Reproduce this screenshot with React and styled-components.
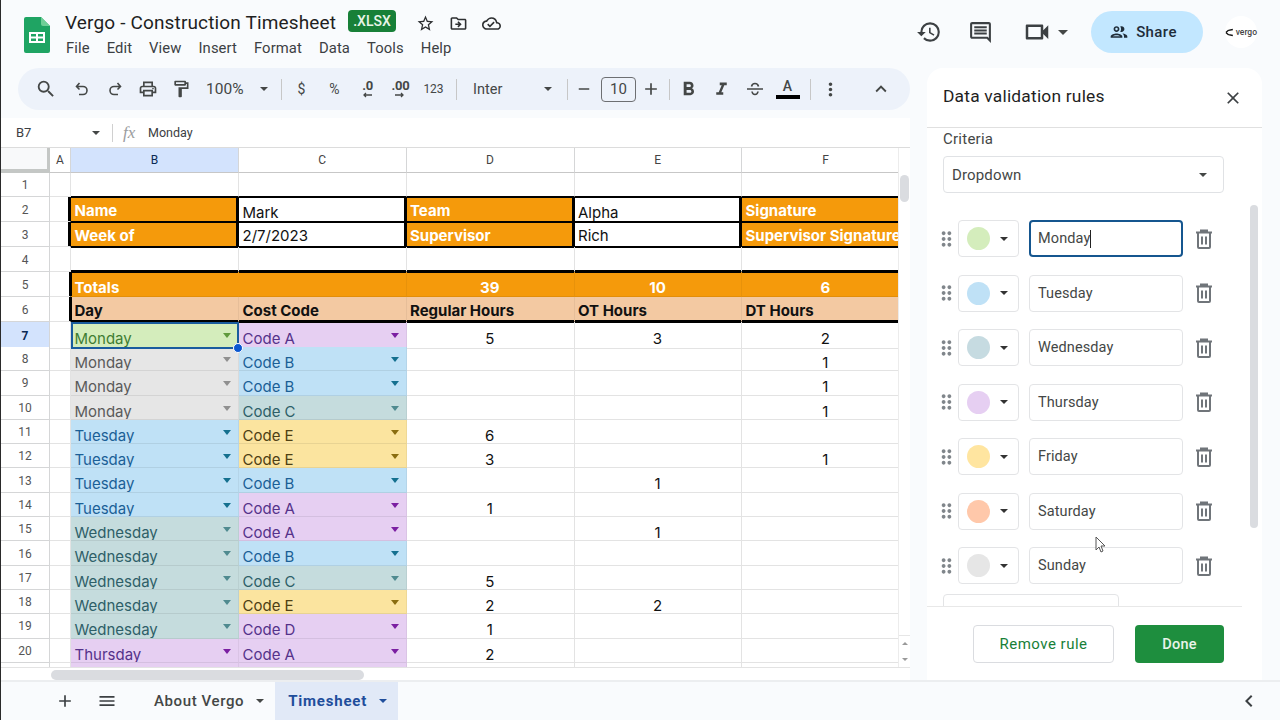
import React from "react";
import styled, { createGlobalStyle } from "styled-components";
import {
  MdSearch, MdOutlinePrint, MdOutlineFormatPaint, MdFormatBold, MdFormatItalic,
  MdMoreVert, MdKeyboardArrowUp, MdDragIndicator, MdClose, MdAdd,
  MdMenu, MdChevronLeft, MdRemove, MdHistory, MdOutlineComment, MdOutlineVideocam, MdOutlineGroup,
  MdStarBorder, MdOutlineDriveFileMove, MdOutlineCloudDone,
} from "react-icons/md";

const Global = createGlobalStyle`
  html, body { margin: 0; padding: 0; background: #f9fbfd; }
  * { box-sizing: border-box; }
  body { font-family: Roboto, "Liberation Sans", sans-serif; color: #444746; overflow: hidden; }
`;

const Page = styled.div`
  width: 1280px; height: 720px; display: flex; flex-direction: column;
  background: #f9fbfd; border-left: 1px solid #2a2a2a; overflow: hidden;
`;
const Header = styled.header`
  height: 68px; flex: none; display: flex; align-items: flex-start; padding-left: 22px;
`;
const LogoWrap = styled.div`margin-top: 16px; width: 28px; height: 38px; flex: none;`;
const TitleColumn = styled.div`margin-left: 14px; padding-top: 9px; display: flex; flex-direction: column;`;
const TitleRow = styled.div`display: flex; align-items: center; height: 26px;`;
const Title = styled.div`font-size: 19px; color: #1f1f1f; letter-spacing: .15px; white-space: nowrap; width: 283px;`;
const Badge = styled.div`
  width: 48px; height: 22px; background: #188038; color: #e8f5e9; border-radius: 4px; font-size: 14px;
  font-weight: 500; display: flex; align-items: center; justify-content: center; margin-top: -3px;
`;
const TitleIcon = styled.span`
  display: flex; width: 33px; justify-content: center; color: #2d2f31; font-size: 19px; margin-top: 2px;
  &:first-of-type { margin-left: 13px; }
`;
const MenuRow = styled.nav`display: flex; gap: 17px; margin-top: 1px; padding-left: 1px;`;
const MenuItem = styled.span`font-size: 14.8px; color: #3c4043; line-height: 24px; letter-spacing: .1px;`;
const HeaderRight = styled.div`margin-left: auto; display: flex; align-items: center; height: 64px; padding-right: 23px;`;
const HeadIcon = styled.span`display: flex; color: #3c4043; font-size: ${p => p.$s || 26}px; margin-right: ${p => p.$mr || 0}px;`;
const Caret = styled.span`
  display: inline-block; flex: none; width: 0; height: 0; border-left: ${p => p.$w || 5}px solid transparent;
  border-right: ${p => p.$w || 5}px solid transparent; border-top: ${p => p.$w || 5}px solid ${p => p.$c || "#444746"};
`;
const ShareButton = styled.button`
  margin-left: 23px; width: 112px; height: 42px; border: 0; border-radius: 21px; background: #c2e7ff; color: #1f2d3a;
  font: 500 15px Roboto, sans-serif; letter-spacing: .4px; display: flex; align-items: center; justify-content: center; gap: 7px; padding: 0 8px 0 0;
  svg { font-size: 20px; }
`;
const VergoBadge = styled.div`
  margin-left: 22px; width: 32px; height: 32px; border-radius: 50%; background: #fff; display: flex; align-items: center;
  justify-content: center; gap: 2px; font: 500 8.5px Roboto, sans-serif; color: #444;
`;

const Main = styled.div`flex: 1; display: flex; min-height: 0;`;
const LeftColumn = styled.div`width: 909px; flex: none; display: flex; flex-direction: column;`;
const Toolbar = styled.div`
  height: 42px; flex: none; margin-left: 17px; border-radius: 21px; background: #edf2fa; display: flex; align-items: center; padding-left: 11px;
  margin-bottom: 8px; color: #444746;
`;
const ToolButton = styled.span`
  width: ${p => p.$wd || 33}px; height: 33px; flex: none; display: flex; align-items: center; justify-content: center; font-size: ${p => p.$s || 20}px;
  margin-left: ${p => p.$ml || 0}px; color: #444746;
`;
const ToolText = styled.span`font-size: ${p => p.$s || 14}px; color: #444746; font-weight: ${p => p.$w || 400};`;
const ToolSelect = styled.div`
  width: ${p => p.$w}px; flex: none; display: flex; align-items: center; justify-content: space-between;
  padding: 0 ${p => p.$pr}px 0 ${p => p.$pl}px; font-size: 15.5px; color: #444746;
`;
const Sep = styled.span`width: 1px; height: 21px; background: #c7c7c7; flex: none; margin: 0 ${p => p.$r}px 0 ${p => p.$l}px;`;
const Decimal = styled.span`
  display: flex; flex-direction: column; align-items: center; font-size: 13px; font-weight: 700; line-height: 11px; letter-spacing: -.3px;
  svg { display: block; margin-top: 1px; }
`;
const SizeBox = styled.div`
  width: 35px; height: 25px; flex: none; margin-left: 4px; border: 1px solid #6d6f72; border-radius: 4px; font-size: 15px;
  display: flex; align-items: center; justify-content: center;
`;
const ColorA = styled.span`
  display: flex; flex-direction: column; align-items: center; font-size: 14px; font-weight: 500; line-height: 15px;
  &::after { content: ""; display: block; width: 24px; height: 4px; background: #000; margin-top: 1px; }
`;

const Sheet = styled.div`flex: 1; background: #fff; display: flex; flex-direction: column; min-height: 0;`;
const FormulaBar = styled.div`
  height: 30px; flex: none; display: flex; align-items: center; border-bottom: 1px solid #dcdcdc; padding-left: 15px; font-size: 12.5px; color: #3c4043;
`;
const NameBox = styled.div`width: 84px; display: flex; align-items: center; justify-content: space-between; font-size: 13px;`;
const FormulaSep = styled.span`width: 1px; height: 18px; background: #d0d0d0; margin: 0 10px 0 12px;`;
const Fx = styled.span`font: italic 17px "Liberation Serif", serif; color: #9a9c9e; margin-right: 11px; width: 14px;`;
const GridArea = styled.div`flex: 1; display: flex; min-height: 0;`;
const Table = styled.div`width: 897px; flex: none; display: flex; flex-direction: column; overflow: hidden;`;
const cols = "49px 21px 168px 167.5px 168px 167.5px 168px";
const Row = styled.div`display: grid; grid-template-columns: ${cols}; height: ${p => p.$h}px; flex: none;`;
const ColHead = styled.div`
  display: flex; align-items: center; justify-content: center; font-size: 12px; color: #444; border-right: 1px solid #d5d6d7; border-bottom: 1px solid #c7c7c7;
  background: ${p => (p.$on ? "#d3e3fd" : "#fff")}; color: ${p => (p.$on ? "#0b2a55" : "#444")};
`;
const Corner = styled.div`background: #f8f9fa; border-right: 3px solid #c4c7c5; border-bottom: 4px solid #c4c7c5;`;
const RowHead = styled.div`
  display: flex; align-items: center; justify-content: center; font-size: 12px; padding-top: 1px; border-right: 1px solid #d5d6d7; border-bottom: 1px solid #d5d6d7;
  background: ${p => (p.$on ? "#d3e3fd" : "#fff")}; color: ${p => (p.$on ? "#0b2a55" : "#555")}; font-weight: ${p => (p.$on ? 700 : 400)};
`;
/* Thick border codes: t/l = 1px inside the cell; b/r = the 1px gridline turned black; B/R = that plus 1px inside; S = right edge, 3px in all. */
const thick = sides => {
  const parts = [];
  if (sides.includes("t")) parts.push("inset 0 1px 0 #000");
  if (sides.includes("B")) parts.push("inset 0 -1px 0 #000");
  if (sides.includes("l")) parts.push("inset 1px 0 0 #000");
  if (sides.includes("R")) parts.push("inset -1px 0 0 #000");
  if (sides.includes("S")) parts.push("inset -2px 0 0 #000");
  return parts.length ? parts.join(",") : "none";
};
const hasRight = s => /[rRS]/.test(s);
const hasBottom = s => /[bB]/.test(s);
const Cell = styled.div`
  position: relative; min-width: 0; display: flex; overflow: ${p => (p.$open ? "visible" : "hidden")}; white-space: nowrap; font-family: Inter, sans-serif;
  font-size: 15px; line-height: 18px; padding: ${p => p.$pt ?? 7}px ${p => (p.$tri ? 7 : 4)}px 0 3.5px;
  align-items: flex-start; justify-content: ${p => (p.$tri ? "space-between" : p.$c ? "center" : "flex-start")};
  background: ${p => p.$bg || "transparent"}; color: ${p => p.$fg || "#111"}; font-weight: ${p => p.$w || 400};
  border-right: 1px solid ${p => (hasRight(p.$b || "") ? "#000" : p.$nr ? "transparent" : p.$bg ? "rgba(0,0,0,.05)" : "#e3e3e3")};
  border-bottom: 1px solid ${p => (hasBottom(p.$b || "") ? "#000" : p.$bg ? "rgba(0,0,0,.07)" : "#e3e3e3")};
  box-shadow: ${p => thick(p.$b || "")};
  ${p => p.$sel && "outline: 2px solid #1a5c9e; outline-offset: -2px; z-index: 2;"}
`;
const Tri = styled.span`
  flex: none; width: 0; height: 0; border-left: 4.5px solid transparent; border-right: 4.5px solid transparent; border-top: 5px solid ${p => p.$c};
  align-self: flex-start; margin-top: 3px;
`;
const Handle = styled.span`
  position: absolute; right: -5px; bottom: -5px; width: 10px; height: 10px; border-radius: 50%; background: #0b57d0; border: 1px solid #fff; z-index: 3;
`;
const VScroll = styled.div`
  flex: 1; display: flex; flex-direction: column; align-items: center; justify-content: space-between; border-left: 1px solid #ececec; padding-top: 27px; background: #fff;
`;
const Thumb = styled.div`width: 9px; height: 27px; border-radius: 5px; background: #dadce0;`;
const ArrowBox = styled.div`
  width: 100%; display: flex; flex-direction: column; align-items: center; gap: 13px; padding: 0 0 6px; border-top: 1px solid #e6e6e6; padding-top: 6px;
`;
const SmallUp = styled.span`width: 0; height: 0; border-left: 3px solid transparent; border-right: 3px solid transparent; border-bottom: 3px solid #999;`;
const SmallDown = styled.span`width: 0; height: 0; border-left: 3px solid transparent; border-right: 3px solid transparent; border-top: 3px solid #999;`;
const HScroll = styled.div`height: 13px; flex: none; padding: 2px 0 1px 50px; border-top: 1px solid #e3e3e3;`;
const HThumb = styled.div`width: 313px; height: 10px; background: #dadce0; border-radius: 5px;`;

const Panel = styled.aside`
  position: relative; width: 335px; margin-left: 17px; flex: none; background: #fff; border-radius: 16px 16px 0 0; display: flex; flex-direction: column; min-height: 0;
`;
const PanelHead = styled.div`
  height: 60px; flex: none; display: flex; align-items: center; justify-content: space-between; padding: 0 19px 4px 16px; border-bottom: 1px solid #e0e0e0;
`;
const PanelTitle = styled.div`font-size: 17.4px; color: #1f1f1f; letter-spacing: .2px; font-weight: 400;`;
const CloseBtn = styled.span`display: flex; font-size: 20px; color: #3c4043; margin-top: 4px;`;
const PanelBody = styled.div`flex: 1; min-height: 0; overflow: hidden; padding: 2px 0 0 16px;`;
const Label = styled.div`font-size: 15px; color: #444746; line-height: 18px; letter-spacing: .25px;`;
const SelectBox = styled.div`
  margin-top: 8px; width: 281px; height: 37px; border: 1px solid #e0e2e5; border-radius: 4px; padding: 0 16px 0 8px; display: flex; align-items: center; justify-content: space-between;
  font-size: 15px; color: #444746; letter-spacing: .15px;
`;
const ItemList = styled.div`margin-top: 27px; display: flex; flex-direction: column; gap: 17.5px;`;
const Item = styled.div`display: flex; align-items: center; height: 37px;`;
const Drag = styled.span`display: flex; font-size: 28px; color: #80868b; margin-left: -8px; width: 23px; justify-content: flex-start;`;
const Chip = styled.div`
  width: 61px; height: 37px; border: 1px solid #e3e4e6; border-radius: 4px; display: flex; align-items: center; padding: 0 10px 0 8px; justify-content: space-between; flex: none;
`;
const Swatch = styled.span`width: 23px; height: 23px; border-radius: 50%; background: ${p => p.$c};`;
const ItemInput = styled.div`
  margin-left: 10px; width: 154px; height: 37px; flex: none; border-radius: 4px; display: flex; align-items: center; font-size: 14.5px; color: #444746; letter-spacing: .1px;
  border: ${p => (p.$on ? "2px solid #15568f" : "1px solid #e3e4e6")}; padding-left: ${p => (p.$on ? 7 : 8)}px;
`;
const TextCaret = styled.span`width: 1px; height: 18px; background: #222;`;
const Trash = styled.span`display: flex; margin-left: 12px; color: #70757a;`;
const AddButton = styled.div`
  margin-top: 10px; width: 176px; height: 38px; border: 1px solid #e3e4e6; border-radius: 4px; display: flex; align-items: center; justify-content: center; font-size: 14.5px; color: #3c4043;
`;
const PanelFoot = styled.div`
  height: 74px; flex: none; margin-right: 20px; border-top: 1px solid #e8e8e8; display: flex; justify-content: flex-end; align-items: flex-start; gap: 21px; padding: 18px 18px 0 0;
`;
const OutlineBtn = styled.button`
  width: 141px; height: 38px; border: 1px solid #dadce0; background: #fff; border-radius: 4px; color: #188038; font: 400 15px Roboto, sans-serif; letter-spacing: .5px;
`;
const DoneBtn = styled.button`
  width: 89px; height: 38px; border: 0; background: #1e8e3e; border-radius: 4px; color: #e9f5ea; font: 500 14.5px Roboto, sans-serif; letter-spacing: .3px;
`;
const PanelScroll = styled.div`position: absolute; left: 323px; top: 137px; width: 8px; height: 323px; background: #dadce0; border-radius: 4px;`;
const Pointer = styled.svg`position: absolute; left: 168px; top: 468px;`;

const BottomBar = styled.footer`
  height: 40px; flex: none; border-top: 2px solid #eceef0; display: flex; align-items: stretch; padding-left: 54px; background: #f9fbfd; color: #444746;
`;
const BarIcon = styled.span`display: flex; align-items: center; justify-content: center; width: 20px; font-size: 22px; margin-right: ${p => p.$mr}px; color: #3c4043;`;
const Tab = styled.div`
  display: flex; align-items: center; gap: 12px; font-size: 15px; letter-spacing: ${p => (p.$on ? .8 : .6)}px; padding: 0 11px 0 13px; height: 38px;
  color: ${p => (p.$on ? "#1f4e9c" : "#444746")}; background: ${p => (p.$on ? "#e1e9f7" : "transparent")}; font-weight: ${p => (p.$on ? 700 : 500)};
`;
const Collapse = styled.span`margin-left: auto; margin-right: 19px; font-size: 24px; display: flex; align-items: center; color: #3c4043;`;

const C = {
  green: ["#d4edbc", "#3f7d33", "#5f9a3c"],
  grey: ["#e6e6e6", "#5a5a5a", "#909090"],
  blue: ["#bfe1f6", "#1b5f96", "#14708f"],
  teal: ["#c5dcdd", "#2e5f68", "#4f8a8f"],
  purple: ["#e6cff2", "#55328a", "#7b1fa2"],
  yellow: ["#fbe49f", "#4f4014", "#8a6d10"],
};
const ORANGE = "#f59a0b";
const PEACH = "#f3c9a2";
const days = { M: ["Monday", "grey"], T: ["Tuesday", "blue"], W: ["Wednesday", "teal"], H: ["Thursday", "purple"] };
const codes = { A: "purple", B: "blue", C: "teal", D: "purple", E: "yellow" };
const rowsData = [
  [8, "M", "B", "", "", "1"], [9, "M", "B", "", "", "1"], [10, "M", "C", "", "", "1"], [11, "T", "E", "6", "", ""],
  [12, "T", "E", "3", "", "1"], [13, "T", "B", "", "1", ""], [14, "T", "A", "1", "", ""], [15, "W", "A", "", "1", ""],
  [16, "W", "B", "", "", ""], [17, "W", "C", "5", "", ""], [18, "W", "E", "2", "2", ""], [19, "W", "D", "1", "", ""],
  [20, "H", "A", "2", "", ""],
];
const items = [
  ["Monday", "#d4edbc"], ["Tuesday", "#bfe1f6"], ["Wednesday", "#c6dbe1"], ["Thursday", "#e6cff2"],
  ["Friday", "#ffe5a0"], ["Saturday", "#ffc8aa"], ["Sunday", "#e6e6e6"],
];

const DropCell = ({ text, tone, children, ...rest }) => (
  <Cell $tri $bg={C[tone][0]} $fg={C[tone][1]} {...rest}>
    <span>{text}</span>
    <Tri $c={C[tone][2]} />
    {children}
  </Cell>
);
const HeadCell = props => <Cell $bg={ORANGE} $fg="#fff" $w={700} {...props} />;
const PeachCell = props => <Cell $bg={PEACH} $w={700} $pt={5} {...props} />;

const SheetLogo = () => (
  <svg width="28" height="38" viewBox="0 0 28 38">
    <path d="M3 1h15l9 9v25a2 2 0 0 1-2 2H3a2 2 0 0 1-2-2V3a2 2 0 0 1 2-2z" fill="#1fa463" />
    <path d="M18 1l9 9h-7a2 2 0 0 1-2-2z" fill="#6fcf97" />
    <path d="M6 16h16v11H6z M8 18v2.5h5V18z M15 18v2.5h5V18z M8 22.5V25h5v-2.5z M15 22.5V25h5v-2.5z" fill="#fff" fillRule="evenodd" />
  </svg>
);
const UndoIcon = ({ flip }) => (
  <svg width="18" height="18" viewBox="0 0 18 18" fill="none" stroke="#444746" strokeWidth="1.6" transform={flip ? "scale(-1 1)" : undefined}>
    <path d="M6.5 3L3.5 6.5l3 3M3.5 6.5h6.5a4 4 0 0 1 0 8H6" />
  </svg>
);
const StrikeIcon = () => (
  <svg width="20" height="20" viewBox="0 0 20 20" fill="none" stroke="#444746" strokeWidth="1.6">
    <path d="M2 10h16M6.5 7.5C7 5 9 4.5 10 4.5s3 .5 3.5 3M7 12.5c.3 2 1.8 3 3 3s2.7-1 3-3" />
  </svg>
);
const TrashIcon = () => (
  <svg width="18" height="20" viewBox="0 0 18 20" fill="none" stroke="#70757a" strokeWidth="2">
    <path d="M1 3.5h16M6 3.5V1.5h6v2M3 3.5V18a1 1 0 0 0 1 1h10a1 1 0 0 0 1-1V3.5M7 7.5v8M11 7.5v8" />
  </svg>
);

export default function App() {
  return (
    <Page>
      <Global />
      <Header>
        <LogoWrap><SheetLogo /></LogoWrap>
        <TitleColumn>
          <TitleRow>
            <Title>Vergo - Construction Timesheet</Title>
            <Badge>.XLSX</Badge>
            <TitleIcon><MdStarBorder /></TitleIcon>
            <TitleIcon><MdOutlineDriveFileMove /></TitleIcon>
            <TitleIcon><MdOutlineCloudDone /></TitleIcon>
          </TitleRow>
          <MenuRow>
            {["File", "Edit", "View", "Insert", "Format", "Data", "Tools", "Help"].map(m => <MenuItem key={m}>{m}</MenuItem>)}
          </MenuRow>
        </TitleColumn>
        <HeaderRight>
          <HeadIcon $mr={26}><MdHistory /></HeadIcon>
          <HeadIcon $s={25} $mr={29}><MdOutlineComment /></HeadIcon>
          <HeadIcon $s={30} $mr={6}><MdOutlineVideocam /></HeadIcon>
          <Caret />
          <ShareButton><MdOutlineGroup />Share</ShareButton>
          <VergoBadge>
            <svg width="10" height="9" viewBox="0 0 10 9"><path d="M1 4.5l3-2.5M1 4.5l3 2.5M4 2l5-1M4 7l5 1" stroke="#111" strokeWidth="1.6" fill="none" /></svg>
            vergo
          </VergoBadge>
        </HeaderRight>
      </Header>
      <Main>
        <LeftColumn>
          <Toolbar>
            <ToolButton $s={22}><MdSearch /></ToolButton>
            <ToolButton $ml={3}><UndoIcon /></ToolButton>
            <ToolButton><UndoIcon flip /></ToolButton>
            <ToolButton><MdOutlinePrint /></ToolButton>
            <ToolButton><MdOutlineFormatPaint /></ToolButton>
            <ToolSelect $w={75} $pl={9} $pr={4}>100%<Caret $w={4.5} /></ToolSelect>
            <Sep $l={9} $r={3} />
            <ToolButton><ToolText $s={14}>$</ToolText></ToolButton>
            <ToolButton><ToolText $s={14}>%</ToolText></ToolButton>
            <ToolButton>
              <Decimal>.0
                <svg width="10" height="6" viewBox="0 0 10 6"><path d="M10 3H2M4 1L2 3l2 2" stroke="#444746" strokeWidth="1.3" fill="none" /></svg>
              </Decimal>
            </ToolButton>
            <ToolButton>
              <Decimal>.00
                <svg width="10" height="6" viewBox="0 0 10 6"><path d="M0 3h8M6 1l2 2-2 2" stroke="#444746" strokeWidth="1.3" fill="none" /></svg>
              </Decimal>
            </ToolButton>
            <ToolButton><ToolText $s={12}>123</ToolText></ToolButton>
            <Sep $l={6} $r={0} />
            <ToolSelect $w={100} $pl={16} $pr={5}><ToolText $s={14.5}>Inter</ToolText><Caret $w={4.5} /></ToolSelect>
            <Sep $l={10} $r={3} />
            <ToolButton $s={18} $wd={26}><MdRemove /></ToolButton>
            <SizeBox>10</SizeBox>
            <ToolButton $s={20} $wd={30}><MdAdd /></ToolButton>
            <Sep $l={3} $r={2} />
            <ToolButton $s={23}><MdFormatBold /></ToolButton>
            <ToolButton $s={21}><MdFormatItalic /></ToolButton>
            <ToolButton><StrikeIcon /></ToolButton>
            <ToolButton><ColorA>A</ColorA></ToolButton>
            <Sep $l={6} $r={3} />
            <ToolButton $s={21}><MdMoreVert /></ToolButton>
            <ToolButton $s={22} $ml={17}><MdKeyboardArrowUp /></ToolButton>
          </Toolbar>
          <Sheet>
            <FormulaBar>
              <NameBox>B7<Caret $w={4} /></NameBox>
              <FormulaSep />
              <Fx>fx</Fx>
              Monday
            </FormulaBar>
            <GridArea>
              <Table>
                <Row $h={25}>
                  <Corner />
                  {["A", "B", "C", "D", "E", "F"].map(c => <ColHead key={c} $on={c === "B"}>{c}</ColHead>)}
                </Row>
                <Row $h={24}><RowHead>1</RowHead><Cell /><Cell $b="b" /><Cell $b="b" /><Cell $b="b" /><Cell $b="b" /><Cell $b="b" /></Row>
                <Row $h={25}>
                  <RowHead>2</RowHead><Cell $b="S" />
                  <HeadCell $b="tSb" $pt={5}>Name</HeadCell>
                  <Cell $b="tSb">Mark</Cell>
                  <HeadCell $b="tSb" $pt={5}>Team</HeadCell>
                  <Cell $b="tSb">Alpha</Cell>
                  <HeadCell $b="tb" $pt={5}>Signature</HeadCell>
                </Row>
                <Row $h={25}>
                  <RowHead>3</RowHead><Cell $b="S" />
                  <HeadCell $b="tSb" $pt={5}>Week of</HeadCell>
                  <Cell $b="tSb" $pt={5}>2/7/2023</Cell>
                  <HeadCell $b="tSb" $pt={5}>Supervisor</HeadCell>
                  <Cell $b="tSb" $pt={5}>Rich</Cell>
                  <HeadCell $b="tb" $pt={5}>Supervisor Signature</HeadCell>
                </Row>
                <Row $h={25}><RowHead>4</RowHead><Cell /><Cell $b="tB" /><Cell $b="tB" /><Cell $b="tB" /><Cell $b="tB" /><Cell $b="tB" /></Row>
                <Row $h={25}>
                  <RowHead>5</RowHead><Cell $b="R" />
                  <HeadCell $b="tl" $nr>Totals</HeadCell>
                  <HeadCell $b="t" />
                  <HeadCell $b="t" $c>39</HeadCell>
                  <HeadCell $b="t" $c>10</HeadCell>
                  <HeadCell $b="t" $c>6</HeadCell>
                </Row>
                <Row $h={25}>
                  <RowHead>6</RowHead><Cell $b="R" />
                  <PeachCell $b="lB">Day</PeachCell>
                  <PeachCell $b="B">Cost Code</PeachCell>
                  <PeachCell $b="B">Regular Hours</PeachCell>
                  <PeachCell $b="B">OT Hours</PeachCell>
                  <PeachCell $b="B">DT Hours</PeachCell>
                </Row>
                <Row $h={25}>
                  <RowHead $on>7</RowHead><Cell />
                  <DropCell text="Monday" tone="green" $sel $open $pt={8}><Handle /></DropCell>
                  <DropCell text="Code A" tone="purple" $b="t" $pt={8} />
                  <Cell $c $b="t" $pt={8}>5</Cell><Cell $c $b="t" $pt={8}>3</Cell><Cell $c $b="t" $pt={8}>2</Cell>
                </Row>
                {rowsData.map(([n, d, code, x, y, z]) => (
                  <Row key={n} $h={24.3}>
                    <RowHead>{n}</RowHead><Cell />
                    <DropCell text={days[d][0]} tone={days[d][1]} />
                    <DropCell text={`Code ${code}`} tone={codes[code]} />
                    <Cell $c>{x}</Cell><Cell $c>{y}</Cell><Cell $c>{z}</Cell>
                  </Row>
                ))}
                <Row $h={24.3}>
                  <RowHead /><Cell />
                  <Cell $bg={C.purple[0]} /><Cell $bg={C.purple[0]} />
                  <Cell /><Cell /><Cell />
                </Row>
              </Table>
              <VScroll>
                <Thumb />
                <ArrowBox><SmallUp /><SmallDown /></ArrowBox>
              </VScroll>
            </GridArea>
            <HScroll><HThumb /></HScroll>
          </Sheet>
        </LeftColumn>
        <Panel>
          <PanelHead>
            <PanelTitle>Data validation rules</PanelTitle>
            <CloseBtn><MdClose /></CloseBtn>
          </PanelHead>
          <PanelBody>
            <Label>Criteria</Label>
            <SelectBox>Dropdown<Caret $w={4.5} /></SelectBox>
            <ItemList>
              {items.map(([name, col], i) => (
                <Item key={name}>
                  <Drag><MdDragIndicator /></Drag>
                  <Chip><Swatch $c={col} /><Caret $w={4.5} $c="#333" /></Chip>
                  <ItemInput $on={i === 0}>{name}{i === 0 && <TextCaret />}</ItemInput>
                  <Trash><TrashIcon /></Trash>
                </Item>
              ))}
            </ItemList>
            <AddButton>Add another item</AddButton>
          </PanelBody>
          <PanelFoot>
            <OutlineBtn>Remove rule</OutlineBtn>
            <DoneBtn>Done</DoneBtn>
          </PanelFoot>
          <PanelScroll />
          <Pointer width="12" height="18" viewBox="0 0 12 18">
            <path d="M1 1v13l3-3 2 5 2-1-2-5h4z" fill="#fff" stroke="#555" strokeWidth="1" />
          </Pointer>
        </Panel>
      </Main>
      <BottomBar>
        <BarIcon $mr={22}><MdAdd /></BarIcon>
        <BarIcon $mr={24}><MdMenu /></BarIcon>
        <Tab>About Vergo<Caret $w={4.5} /></Tab>
        <Tab $on>Timesheet<Caret $w={4.5} $c="#1f4e9c" /></Tab>
        <Collapse><MdChevronLeft /></Collapse>
      </BottomBar>
    </Page>
  );
}
